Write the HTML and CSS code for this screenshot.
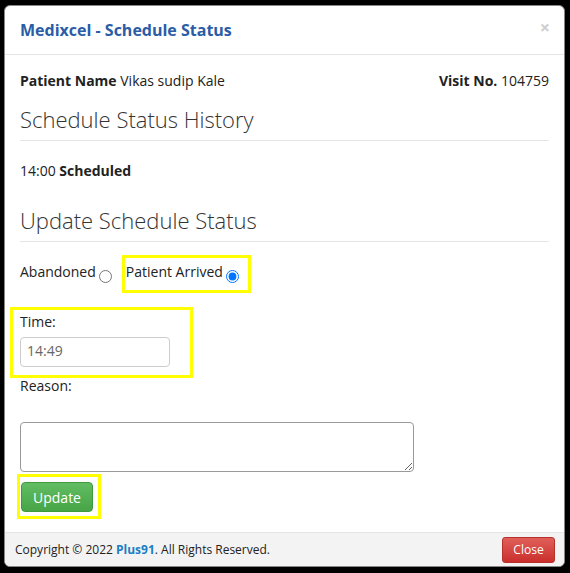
FILE: index.html
```html
<!DOCTYPE html>
<html>
<head>
<meta charset="utf-8">
<link rel="stylesheet" href="styles.css">
</head>
<body>
<div class="modal">
  <div class="header">
    <div class="title">Medixcel - Schedule Status</div>
    <div class="x">×</div>
  </div>
  <div class="body">
    <div class="info">
      <div><b>Patient Name</b> Vikas sudip Kale</div>
      <div><b>Visit No.</b> 104759</div>
    </div>
    <h3 class="sec sec1">Schedule Status History</h3>
    <div class="hist">14:00 <b>Scheduled</b></div>
    <h3 class="sec sec2">Update Schedule Status</h3>
    <div class="radio-row">
      <label class="opt">Abandoned<input type="radio" name="s"></label>
      <label class="opt hl">Patient Arrived<input type="radio" name="s" checked></label>
    </div>
    <div class="time-box">
      <div class="lbl">Time:</div>
      <input class="time" type="text" value="14:49">
    </div>
    <div class="lbl reason">Reason:</div>
    <textarea class="ta"></textarea>
    <div class="upd-box"><button class="btn upd">Update</button></div>
  </div>
  <div class="footer">
    <div class="copy">Copyright © 2022 <b class="brand">Plus91</b>. All Rights Reserved.</div>
    <button class="btn close">Close</button>
  </div>
</div>
</body>
</html>
```
FILE: styles.css
```css
html, body { margin: 0; padding: 0; }
body {
  background: #000;
  font-family: "Open Sans", "Noto Sans", sans-serif;
  font-size: 14px;
  color: #222;
}
.modal {
  margin: 5px 0 0 4px;
  width: 561px;
  height: 562px;
  box-sizing: border-box;
  border: 1px solid #888;
  border-radius: 6px;
  background: #fff;
  display: flex;
  flex-direction: column;
  overflow: hidden;
}
.header {
  height: 48px;
  flex: none;
  border-bottom: 1px solid #e5e5e5;
  display: flex;
  align-items: center;
  justify-content: space-between;
  padding: 0 15px;
}
.title {
  font-size: 16px;
  font-weight: 700;
  line-height: 20px;
  color: #2b5ca6;
}
.x {
  font-size: 18px;
  font-weight: 700;
  color: #cfcfcf;
  line-height: 20px;
  margin-top: -6px;
  margin-right: -1px;
}
.body {
  flex: 1;
  padding: 16px 15px 0;
}
.info {
  display: flex;
  justify-content: space-between;
  line-height: 20px;
}
.sec {
  margin: 0;
  font-size: 22px;
  font-weight: 300;
  line-height: 30px;
  color: #333;
  padding-bottom: 6px;
  border-bottom: 1px solid #e5e5e5;
}
.sec1 { margin-top: 13px; }
.sec2 { margin-top: 24px; }
.hist { margin-top: 20px; line-height: 20px; }
.radio-row {
  margin-top: 13px;
  display: flex;
  align-items: flex-start;
  line-height: 20px;
}
.opt { padding-top: 7px; }
.opt input {
  margin: 3px 3px 0 3px;
  width: 13px;
  height: 13px;
  vertical-align: -6px;
}
.hl {
  margin-left: 7px;
  border: 3px solid #ffff00;
  padding: 4px 6px 7px 1px;
}
.time-box {
  margin: 14px 0 0 -10px;
  width: 183px;
  box-sizing: border-box;
  border: 3px solid #ffff00;
  padding: 2px 0 8px 7px;
}
.lbl { line-height: 20px; }
.time {
  display: block;
  margin-top: 5px;
  width: 150px;
  height: 30px;
  box-sizing: border-box;
  border: 1px solid #ccc;
  border-radius: 4px;
  padding: 2px 6px 6px;
  font-family: inherit;
  font-size: 14px;
  line-height: 20px;
  color: #666;
  background: #fff;
}
.reason { margin-top: -2px; }
.ta {
  display: block;
  margin-top: 26px;
  width: 394px;
  height: 50px;
  box-sizing: border-box;
  border: 1px solid #999;
  border-radius: 4px;
  font-family: inherit;
  font-size: 14px;
}
.upd-box {
  margin: 2px 0 0 -3px;
  display: inline-block;
  border: 3px solid #ffff00;
  padding: 5px 5px 4px 1px;
}
.btn {
  display: block;
  box-sizing: border-box;
  font-family: inherit;
  font-size: 14px;
  color: #fff;
  border-radius: 4px;
  padding: 0;
  cursor: pointer;
}
.upd {
  width: 72px;
  height: 30px;
  background: linear-gradient(#62bd62, #47a447);
  border: 1px solid #3f9a3f;
}
.footer {
  flex: none;
  height: 33px;
  border-top: 1px solid #e5e5e5;
  background: #f3f3f3;
  display: flex;
  align-items: center;
  justify-content: space-between;
  padding: 0 9px 0 10px;
}
.copy { font-size: 12px; line-height: 20px; color: #222; }
.brand { color: #1b7ec4; }
.close {
  width: 53px;
  height: 26px;
  font-size: 12px;
  background: linear-gradient(#e15f5a, #c9302c);
  border: 1px solid #b8302c;
  border-radius: 3px;
}
```
